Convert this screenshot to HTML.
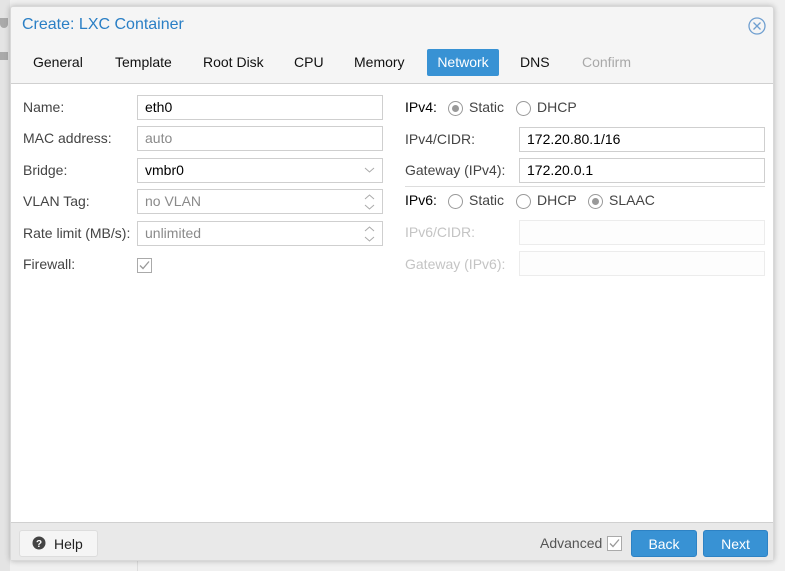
<!DOCTYPE html>
<html><head><meta charset="utf-8"><style>
*{box-sizing:border-box;margin:0;padding:0}
body{width:785px;height:571px;overflow:hidden;background:#f0f0f0;font-family:"Liberation Sans",Arial,sans-serif;font-size:14px;color:#000;position:relative}
.abs{position:absolute}
.dlg{left:10px;top:6px;width:764px;height:555px;background:#f5f5f5;border:1px solid #d8d8d8;box-shadow:0 0 6px rgba(0,0,0,.25);border-radius:3px}
.title{left:22px;top:16px;font-size:16px;color:#2a7fc5}
.tab{top:54px;font-size:14px;color:#111}
.net{left:427px;top:49px;width:72px;height:27px;background:#3892d4;color:#fff;border-radius:2px;text-align:center;line-height:27px}
.body{left:11px;top:83px;width:762px;height:440px;background:#fff;border-top:1px solid #d0d0d0;border-bottom:1px solid #d0d0d0}
.lbl{font-size:14px;color:#444}
.in{height:25px;border:1px solid #cfcfcf;background:#fff;padding-left:7px;line-height:23px;font-size:14px;color:#000}
.ph{color:#8a8a8a}
.dis{border-color:#ececec;background:#fdfdfd}
.radio{width:15px;height:15px;border:1px solid #9a9a9a;border-radius:50%;display:inline-block;position:absolute;background:#fff}
.radio.on::after{content:"";position:absolute;left:3px;top:3px;width:7px;height:7px;border-radius:50%;background:#999}
.foot{left:11px;top:523px;width:762px;height:37px;background:#e9e9e9}
.btn{height:27px;border-radius:3px;text-align:center;line-height:26px;font-size:14px}
.blue{background:#3892d4;color:#fff;border:1px solid #2d82c4}
</style></head><body>
<div class="abs" style="left:0;top:0;width:10px;height:571px;background:#e4e4e4"></div>
<div class="abs" style="left:137px;top:560px;width:1px;height:11px;background:#ddd"></div>
<div class="abs" style="left:0;top:18px;width:8px;height:10px;background:#aaa;border-radius:0 0 4px 4px"></div>
<div class="abs" style="left:0;top:52px;width:8px;height:8px;background:#aaa"></div>
<div class="abs dlg"></div>
<div class="abs title">Create: LXC Container</div>
<svg class="abs" style="left:748px;top:17px" width="18" height="18" viewBox="0 0 18 18"><circle cx="9" cy="9" r="8" fill="none" stroke="#6f9fd0" stroke-width="1.3"/><path d="M5.5 5.5l7 7M12.5 5.5l-7 7" stroke="#6f9fd0" stroke-width="1.3"/></svg>
<div class="abs tab" style="left:33px">General</div>
<div class="abs tab" style="left:115px">Template</div>
<div class="abs tab" style="left:203px">Root Disk</div>
<div class="abs tab" style="left:294px">CPU</div>
<div class="abs tab" style="left:354px">Memory</div>
<div class="abs net">Network</div>
<div class="abs tab" style="left:520px">DNS</div>
<div class="abs tab" style="left:582px;color:#a8a8a8">Confirm</div>
<div class="abs body"></div>

<div class="abs lbl" style="left:23px;top:99px">Name:</div>
<div class="abs lbl" style="left:23px;top:130px">MAC address:</div>
<div class="abs lbl" style="left:23px;top:162px">Bridge:</div>
<div class="abs lbl" style="left:23px;top:193px">VLAN Tag:</div>
<div class="abs lbl" style="left:23px;top:225px">Rate limit (MB/s):</div>
<div class="abs lbl" style="left:23px;top:256px">Firewall:</div>

<div class="abs in" style="left:137px;top:95px;width:246px">eth0</div>
<div class="abs in ph" style="left:137px;top:126px;width:246px">auto</div>
<div class="abs in" style="left:137px;top:158px;width:246px">vmbr0</div>
<svg class="abs" style="left:364px;top:166px" width="11" height="8"><path d="M1 2l4.5 4 4.5-4" fill="none" stroke="#aaa"/></svg>
<div class="abs in ph" style="left:137px;top:189px;width:246px">no VLAN</div>
<svg class="abs" style="left:364px;top:193px" width="11" height="18"><path d="M1 6l4.5-4 4.5 4M1 12l4.5 4 4.5-4" fill="none" stroke="#aaa"/></svg>
<div class="abs in ph" style="left:137px;top:221px;width:246px">unlimited</div>
<svg class="abs" style="left:364px;top:225px" width="11" height="18"><path d="M1 6l4.5-4 4.5 4M1 12l4.5 4 4.5-4" fill="none" stroke="#aaa"/></svg>
<svg class="abs" style="left:137px;top:258px" width="16" height="16"><rect x="0.5" y="0.5" width="14" height="14" fill="#fff" stroke="#aaa"/><path d="M3 7.5l3 3 6-7" fill="none" stroke="#999" stroke-width="1.3"/></svg>

<div class="abs" style="left:405px;top:99px">IPv4:</div>
<span class="radio on" style="left:448px;top:101px"></span><div class="abs lbl" style="left:469px;top:99px">Static</div>
<span class="radio" style="left:516px;top:101px"></span><div class="abs lbl" style="left:537px;top:99px">DHCP</div>
<div class="abs lbl" style="left:405px;top:131px">IPv4/CIDR:</div>
<div class="abs lbl" style="left:405px;top:162px">Gateway (IPv4):</div>
<div class="abs in" style="left:519px;top:127px;width:246px">172.20.80.1/16</div>
<div class="abs in" style="left:519px;top:158px;width:246px">172.20.0.1</div>
<div class="abs" style="left:405px;top:186px;width:360px;height:1px;background:#ddd"></div>
<div class="abs" style="left:405px;top:192px">IPv6:</div>
<span class="radio" style="left:448px;top:194px"></span><div class="abs lbl" style="left:469px;top:192px">Static</div>
<span class="radio" style="left:516px;top:194px"></span><div class="abs lbl" style="left:537px;top:192px">DHCP</div>
<span class="radio on" style="left:588px;top:194px"></span><div class="abs lbl" style="left:609px;top:192px">SLAAC</div>
<div class="abs lbl" style="left:405px;top:224px;color:#c4c4c4">IPv6/CIDR:</div>
<div class="abs lbl" style="left:405px;top:256px;color:#c4c4c4">Gateway (IPv6):</div>
<div class="abs in dis" style="left:519px;top:220px;width:246px"></div>
<div class="abs in dis" style="left:519px;top:251px;width:246px"></div>

<div class="abs foot"></div>
<div class="abs btn" style="left:19px;top:530px;width:79px;background:#f5f5f5;border:1px solid #ddd;color:#222;text-align:left;padding-left:34px">Help</div>
<svg class="abs" style="left:32px;top:536px" width="14" height="14"><circle cx="7" cy="7" r="6.5" fill="#444"/><text x="7" y="11" font-size="10" font-weight="bold" fill="#fff" text-anchor="middle" font-family="Liberation Sans">?</text></svg>
<div class="abs" style="left:540px;top:535px;color:#555">Advanced</div>
<svg class="abs" style="left:607px;top:536px" width="16" height="16"><rect x="0.5" y="0.5" width="14" height="14" fill="#fff" stroke="#aaa"/><path d="M3 7.5l3 3 6-7" fill="none" stroke="#999" stroke-width="1.3"/></svg>
<div class="abs btn blue" style="left:631px;top:530px;width:66px">Back</div>
<div class="abs btn blue" style="left:703px;top:530px;width:65px">Next</div>
</body></html>
